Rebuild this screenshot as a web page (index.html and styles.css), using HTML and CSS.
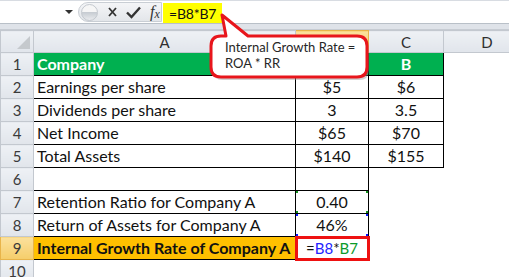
FILE: index.html
```html
<!DOCTYPE html>
<html lang="en">

<head>
    <meta charset="UTF-8">
    <meta name="viewport" content="width=device-width, initial-scale=1.0">
    <title>Internal Growth Rate</title>
    <link rel="stylesheet" href="styles.css">
</head>

<body>
    <div class="formula-bar">
        <div class="name-box">
            <span class="name-arrow"></span>
        </div>
        <div class="fx-buttons">
            <span class="round-btn"></span>
            <svg class="btn-icon" width="9" height="10" viewBox="0 0 9 10">
                <path d="M1 1 L8 9 M8 1 L1 9" stroke="#333" stroke-width="1.8" />
            </svg>
            <svg class="btn-icon" width="15" height="13" viewBox="0 0 15 13">
                <path d="M1 6.5 L5.5 11 L14 1.5" stroke="#333" stroke-width="2.4" fill="none" />
            </svg>
            <span class="fx">f<sub>x</sub></span>
        </div>
        <div class="formula-input">
            <span class="formula-hl">=B8*B7</span>
        </div>
    </div>
    <div class="band"></div>

    <table class="sheet">
        <colgroup>
            <col class="c-row">
            <col class="c-a">
            <col class="c-b">
            <col class="c-c">
            <col class="c-d">
        </colgroup>
        <tr class="head">
            <th class="corner"><span class="corner-tri"></span></th>
            <th>A</th>
            <th class="active">B</th>
            <th>C</th>
            <th>D</th>
        </tr>
        <tr>
            <th>1</th>
            <td class="bd green">Company</td>
            <td class="bd green num">A</td>
            <td class="bd green num">B</td>
            <td></td>
        </tr>
        <tr>
            <th>2</th>
            <td class="bd">Earnings per share</td>
            <td class="bd num">$5</td>
            <td class="bd num">$6</td>
            <td></td>
        </tr>
        <tr>
            <th>3</th>
            <td class="bd">Dividends per share</td>
            <td class="bd num">3</td>
            <td class="bd num">3.5</td>
            <td></td>
        </tr>
        <tr>
            <th>4</th>
            <td class="bd">Net Income</td>
            <td class="bd num">$65</td>
            <td class="bd num">$70</td>
            <td></td>
        </tr>
        <tr>
            <th>5</th>
            <td class="bd">Total Assets</td>
            <td class="bd num">$140</td>
            <td class="bd num">$155</td>
            <td></td>
        </tr>
        <tr>
            <th>6</th>
            <td></td>
            <td class="bd-side"></td>
            <td></td>
            <td></td>
        </tr>
        <tr>
            <th>7</th>
            <td class="bd">Retention Ratio for Company A</td>
            <td class="bd num ref ref-green">0.40</td>
            <td></td>
            <td></td>
        </tr>
        <tr>
            <th>8</th>
            <td class="bd">Return of Assets for Company A</td>
            <td class="bd num ref ref-blue">46%</td>
            <td></td>
            <td></td>
        </tr>
        <tr>
            <th class="active">9</th>
            <td class="bd orange">Internal Growth Rate of Company A</td>
            <td class="bd num edit">=<span class="t-blue">B8</span>*<span class="t-green">B7</span></td>
            <td></td>
            <td></td>
        </tr>
        <tr>
            <th>10</th>
            <td></td>
            <td></td>
            <td></td>
            <td></td>
        </tr>
    </table>

    <!-- callout bubble pointing at the formula -->
    <svg class="callout-shape" width="509" height="277" viewBox="0 0 509 277">
        <path d="M226 37 L222 15 L248 37 L357 37 Q367 37 367 47 L367 68 Q367 78 357 78 L221 78 Q211 78 211 68 L211 47 Q211 37 221 37 Z"
            fill="#9a9a9a" opacity="0.45" transform="translate(2,2)" />
        <path d="M226 36 L222 15 L248 36 L357 36 Q367 36 367 46 L367 67 Q367 77 357 77 L221 77 Q211 77 211 67 L211 46 Q211 36 221 36 Z"
            fill="#fff" stroke="#e8161c" stroke-width="3" stroke-linejoin="round" />
    </svg>
    <div class="callout-text">Internal Growth Rate =<br>ROA * RR</div>
</body>

</html>
```

FILE: styles.css
```css
body {
    margin: 0;
    width: 509px;
    height: 277px;
    overflow: hidden;
    position: relative;
    background: #fff;
    font-family: Lato, "Open Sans", sans-serif;
}

.formula-bar {
    display: flex;
    height: 22px;
    border-top: 1px solid #d8dce2;
    border-bottom: 1px solid #b9c0c8;
    background: #fff;
}

.name-box {
    width: 78px;
    position: relative;
}

.name-arrow {
    position: absolute;
    left: 65px;
    top: 9px;
    border-left: 4px solid transparent;
    border-right: 4px solid transparent;
    border-top: 4px solid #333;
}

.fx-buttons {
    width: 84px;
    display: flex;
    align-items: center;
    padding-left: 2px;
    box-sizing: border-box;
    background: linear-gradient(#f4f5f7, #e3e6ea);
    border: 1px solid #c9ced4;
    border-radius: 11px 0 0 11px;
    margin: 1px 0;
}

.round-btn {
    width: 15px;
    height: 15px;
    border-radius: 50%;
    background: linear-gradient(#f6f6f6 45%, #c7ccd2 50%, #e9ebee);
    border: 1px solid #c3c8ce;
    margin-right: 10px;
}

.btn-icon {
    display: block;
    margin-right: 9px;
}

.fx {
    font-family: "Liberation Serif", serif;
    font-style: italic;
    font-size: 16px;
    color: #333;
}

.fx sub {
    font-size: 12px;
    vertical-align: -1px;
}

.formula-input {
    flex: 1;
    display: flex;
    align-items: stretch;
    padding: 2px 0 0 1px;
}

.formula-hl {
    background: #ffff00;
    font-size: 14px;
    letter-spacing: -0.2px;
    line-height: 21px;
    padding: 0 6px 0 6px;
    color: #111;
}

.band {
    height: 5px;
    background: #dfe3e9;
    border-bottom: 1px solid #c7ccd3;
}

.sheet {
    border-collapse: collapse;
    table-layout: fixed;
    width: 530px;
    font-size: 16px;
}

.c-row {
    width: 33px;
}

.c-a {
    width: 262px;
}

.c-b {
    width: 73px;
}

.c-c {
    width: 75px;
}

.c-d {
    width: 87px;
}

.sheet tr {
    height: 23px;
}

.sheet tr.head {
    height: 22px;
}

.sheet th {
    background: linear-gradient(#eef1f5, #e1e5eb);
    border: 1px solid #c3c8cf;
    font-weight: normal;
    color: #3a3a3a;
    padding: 0;
    font-size: 15px;
    line-height: 20px;
}

.head th {
    color: #2f2f2f;
}

.sheet th.active {
    background: linear-gradient(#fbe19d, #f5cd6a);
    border-color: #e8b44a;
}

.corner {
    position: relative;
}

.corner-tri {
    position: absolute;
    right: 3px;
    bottom: 3px;
    border-left: 13px solid transparent;
    border-bottom: 13px solid #c5c9cd;
}

.sheet td {
    padding: 0 3px;
    white-space: nowrap;
    overflow: hidden;
    color: #111;
    line-height: 20px;
}

.bd {
    border: 1px solid #000;
}

.bd-side {
    border-left: 1px solid #000;
    border-right: 1px solid #000;
}

.num {
    text-align: center;
}

.green {
    background: #00b050;
    color: #fff !important;
    font-weight: bold;
}

.orange {
    background: #ffc000;
    font-weight: bold;
}

.ref {
    position: relative;
}

.ref::after {
    content: "";
    position: absolute;
    inset: -1px;
    border: 1px solid;
    background:
        linear-gradient(currentColor, currentColor) left -3px top -3px / 5px 5px no-repeat,
        linear-gradient(currentColor, currentColor) right -3px top -3px / 5px 5px no-repeat,
        linear-gradient(currentColor, currentColor) left -3px bottom -3px / 5px 5px no-repeat,
        linear-gradient(currentColor, currentColor) right -3px bottom -3px / 5px 5px no-repeat;
}

.ref-green::after {
    color: #10901a;
}

.ref-blue::after {
    color: #0a14ff;
}

.edit {
    outline: 3px solid #ee1111;
    outline-offset: -2px;
    font-size: 15px;
}

.t-blue {
    color: #2323ff;
}

.t-green {
    color: #0a9a2a;
}

.callout-shape {
    position: absolute;
    left: 0;
    top: 0;
    pointer-events: none;
}

.callout-text {
    position: absolute;
    left: 225px;
    top: 39px;
    font-size: 13px;
    line-height: 16px;
    color: #262626;
}
```
